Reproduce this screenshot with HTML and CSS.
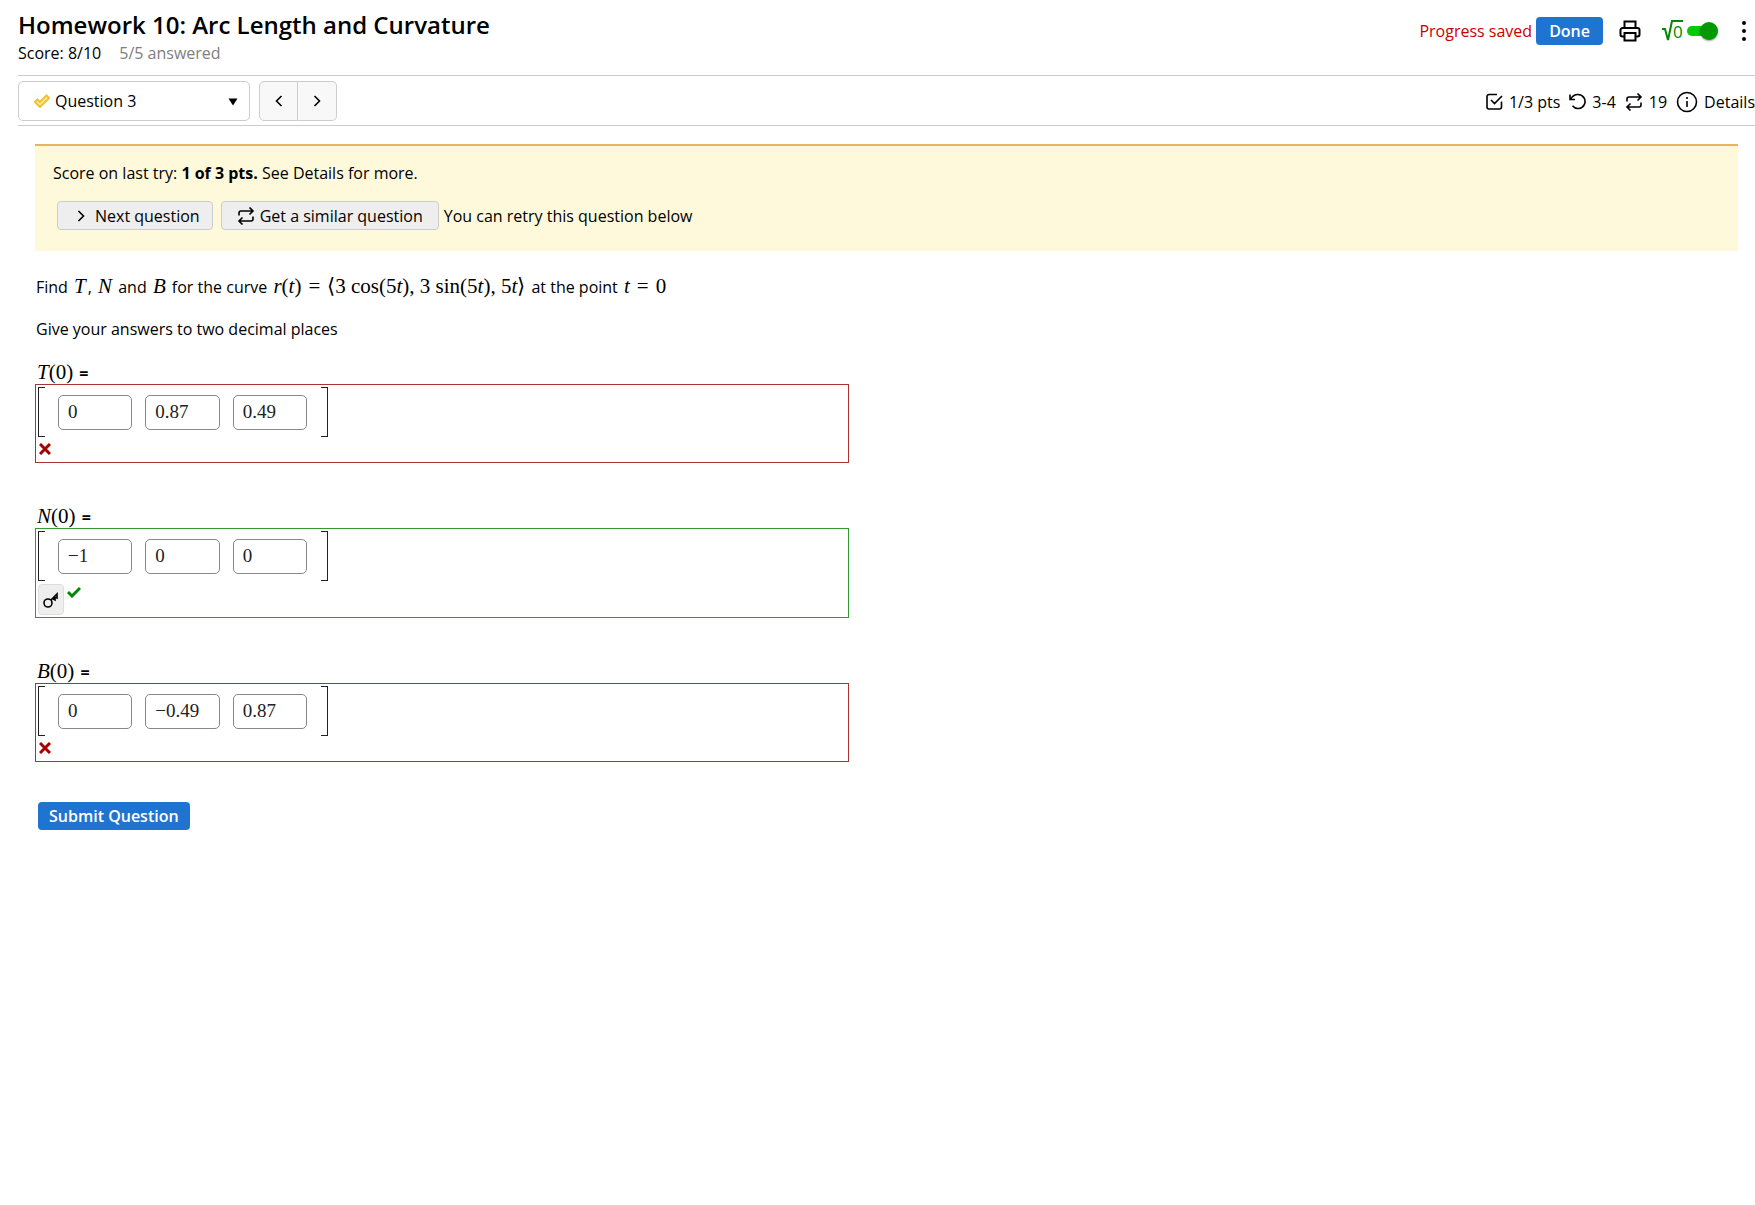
FILE: index.html
```html
<!DOCTYPE html>
<html lang="en">
<head>
<meta charset="utf-8">
<meta name="viewport" content="width=device-width, initial-scale=1">
<title>Homework 10: Arc Length and Curvature</title>
<link rel="stylesheet" href="styles.css">
</head>
<body>
<svg class="defs" aria-hidden="true">
  <symbol id="swap" viewBox="0 0 18 18">
    <path d="M12.500 0.500l3.500 3.500L12.500 7.500M2 8.500V6a2 2 0 0 1 2-2h12M5.500 17.500L2 14l3.500-3.500M16 9.500V12a2 2 0 0 1-2 2H2"/>
  </symbol>
  <symbol id="cross" viewBox="0 0 12 12">
    <path d="M1 1l10 10M11 1l-10 10"/>
  </symbol>
</svg>

<header class="header">
  <div class="heading">
    <h1 class="title">Homework 10: Arc Length and Curvature</h1>
    <p class="progress"><span>Score: 8/10</span><span class="answered">5/5 answered</span></p>
  </div>
  <div class="tools">
    <span class="saved">Progress saved</span>
    <button class="primary done" type="button">Done</button>
    <button class="icon-button print" type="button" aria-label="Print">
      <svg class="icon bold" width="22" height="22" viewBox="0 0 22 22"><path d="M5.500 8V1.500h11V8M5 16.500H3.500a2 2 0 0 1-2-2V10a2 2 0 0 1 2-2h15a2 2 0 0 1 2 2v4.500a2 2 0 0 1-2 2H17M5.500 13h11v7.500h-11z"/></svg>
    </button>
    <label class="math-switch">
      <svg width="24" height="30" viewBox="0 0 24 30" role="img" aria-label="Math entry"><path class="radical" d="M1 13h3l3 11L11 5h11"/><text class="radicand" x="12" y="22">0</text></svg>
      <input class="switch" type="checkbox" checked>
    </label>
    <button class="icon-button more" type="button" aria-label="More">
      <svg width="6" height="22" viewBox="0 0 6 22"><circle cx="3" cy="3" r="2"/><circle cx="3" cy="11" r="2"/><circle cx="3" cy="19" r="2"/></svg>
    </button>
  </div>
</header>

<nav class="bar" aria-label="Questions">
  <div class="picker">
    <select class="picker-select" aria-label="Question"><option>Question 3</option></select>
    <svg class="picker-check" width="16" height="14" viewBox="0 0 16 14"><path d="M1 8l2.500-2.500L6 8l6.500-6.500L15 4l-9 9z"/></svg>
    <svg class="picker-caret" width="10" height="8" viewBox="0 0 10 8"><path d="M0.500 0.500h9L5 7.500z"/></svg>
  </div>
  <div class="pager">
    <button class="pager-button" type="button" aria-label="Previous question"><svg class="icon" width="8" height="12" viewBox="0 0 8 12"><path d="M6.500 1l-5 5 5 5"/></svg></button>
    <button class="pager-button" type="button" aria-label="Next question"><svg class="icon" width="8" height="12" viewBox="0 0 8 12"><path d="M1.500 1l5 5-5 5"/></svg></button>
  </div>
  <div class="facts">
    <svg class="icon" width="17" height="17" viewBox="0 0 17 17"><path d="M11 1.500H3a2 2 0 0 0-2 2V14a2 2 0 0 0 2 2h10.500a2 2 0 0 0 2-2V8.500M5 7l3.500 3.500L16 3"/></svg>
    <span class="fact">1/3 pts</span>
    <svg class="icon" width="17" height="17" viewBox="0 0 17 17"><path d="M1 1.500v5h5M1.500 6.500C3 3.500 5.500 1.500 9 1.500a7 7 0 1 1-5.500 11.300"/></svg>
    <span class="fact">3-4</span>
    <svg class="icon" width="18" height="18"><use href="#swap"/></svg>
    <span class="fact">19</span>
    <button class="details" type="button">
      <svg class="icon" width="22" height="22" viewBox="0 0 22 22"><circle cx="11" cy="11" r="9.500"/><path d="M11 10v6M11 6v2"/></svg>
      Details
    </button>
  </div>
</nav>

<main class="content">
  <section class="notice">
    <p class="notice-text">Score on last try: <b>1 of 3 pts.</b> See Details for more.</p>
    <div class="notice-actions">
      <button class="secondary next" type="button"><svg class="icon" width="8" height="12" viewBox="0 0 8 12"><path d="M1.500 1l5 5-5 5"/></svg>Next question</button>
      <button class="secondary similar" type="button"><svg class="icon" width="18" height="18"><use href="#swap"/></svg>Get a similar question</button>
      <span>You can retry this question below</span>
    </div>
  </section>

  <form class="question">
    <p class="prompt">Find <span class="math"><i>T</i></span>, <span class="math"><i>N</i></span> and <span class="math"><i>B</i></span> for the curve <span class="math"><i>r</i>(<i>t</i>)<span class="relation">=</span>⟨3 cos(5<i>t</i>), 3 sin(5<i>t</i>), 5<i>t</i>⟩</span> at the point <span class="math"><i>t</i><span class="relation">=</span>0</span></p>
    <p class="prompt">Give your answers to two decimal places</p>

    <fieldset class="part">
      <legend class="part-label"><span class="math"><i>T</i>(0)</span> <b>=</b></legend>
      <div class="answer wrong">
        <div class="matrix">
          <input class="cell" type="text" value="0" aria-label="T first component">
          <input class="cell" type="text" value="0.87" aria-label="T second component">
          <input class="cell" type="text" value="0.49" aria-label="T third component">
        </div>
        <div class="marks"><svg class="cross" width="12" height="12" role="img" aria-label="Incorrect"><use href="#cross"/></svg></div>
      </div>
    </fieldset>

    <fieldset class="part">
      <legend class="part-label"><span class="math"><i>N</i>(0)</span> <b>=</b></legend>
      <div class="answer right">
        <div class="matrix">
          <input class="cell" type="text" value="−1" aria-label="N first component">
          <input class="cell" type="text" value="0" aria-label="N second component">
          <input class="cell" type="text" value="0" aria-label="N third component">
        </div>
        <div class="marks">
          <button class="key" type="button" aria-label="Show answer"><svg class="icon" width="16" height="16" viewBox="0 0 16 16"><circle cx="5" cy="11" r="4"/><path d="M8 8l6-6v4l-2-1v3l-2-1"/></svg></button>
          <svg class="tick" width="14" height="12" viewBox="0 0 14 12" role="img" aria-label="Correct"><path d="M1 6l4 4L13 2"/></svg>
        </div>
      </div>
    </fieldset>

    <fieldset class="part">
      <legend class="part-label"><span class="math"><i>B</i>(0)</span> <b>=</b></legend>
      <div class="answer wrong">
        <div class="matrix">
          <input class="cell" type="text" value="0" aria-label="B first component">
          <input class="cell" type="text" value="−0.49" aria-label="B second component">
          <input class="cell" type="text" value="0.87" aria-label="B third component">
        </div>
        <div class="marks"><svg class="cross" width="12" height="12" role="img" aria-label="Incorrect"><use href="#cross"/></svg></div>
      </div>
    </fieldset>

    <button class="primary submit" type="button">Submit Question</button>
  </form>
</main>
</body>
</html>
```
FILE: styles.css
```css
* { box-sizing: border-box; }

body {
  margin: 0;
  background: #fff;
  color: #000;
  font: 16px/20px "Trebuchet MS", "Open Sans", sans-serif;
}

h1, p, fieldset { margin: 0; }

button, select, input { font: inherit; color: inherit; }

button { cursor: pointer; white-space: nowrap; }

.defs { position: absolute; width: 0; height: 0; }

svg { flex: none; }

.icon {
  fill: none;
  stroke: currentColor;
  stroke-width: 1.6;
}

.bold { stroke-width: 2; }

.header {
  display: flex;
  justify-content: space-between;
  margin-left: 18px;
  padding: 8px 8px 11px 0;
  border-bottom: 1px solid #ccc;
}

.title { font-size: 24px; line-height: 34px; font-weight: 600; }

.progress { display: flex; gap: 18px; line-height: 22px; }

.answered { color: #808080; }

.tools { display: flex; align-items: center; height: 46px; }

.saved { color: #c00; }

.primary {
  height: 28px;
  padding: 0 13px;
  border: 0;
  border-radius: 4px;
  background: #1f74d1;
  color: #fff;
  font-weight: 600;
}

.done { margin-left: 4px; }

.icon-button { display: flex; padding: 0; border: 0; background: none; }

.print { margin-left: 16px; }

.math-switch { display: flex; align-items: center; gap: 2px; margin-left: 20px; }

.radical { fill: none; stroke: #080; stroke-width: 2; }

.radicand { fill: #080; font-size: 17px; }

.switch {
  appearance: none;
  position: relative;
  width: 32px;
  height: 18px;
  margin: 0;
}

.switch::before {
  content: "";
  position: absolute;
  inset: 4px 8px 4px 0;
  border-radius: 5px;
  background: #0c0;
}

.switch::after {
  content: "";
  position: absolute;
  top: 0;
  right: 1px;
  width: 18px;
  height: 18px;
  border-radius: 50%;
  background: #090;
  box-shadow: 0 1px 2px #0006;
}

.more { margin-left: 22px; }

.bar {
  display: flex;
  align-items: center;
  margin-left: 18px;
  padding: 5px 0 4px;
  border-bottom: 1px solid #ccc;
}

.picker { position: relative; width: 232px; }

.picker-select {
  display: block;
  appearance: none;
  width: 100%;
  height: 40px;
  padding: 0 36px;
  border: 1px solid #ccc;
  border-radius: 5px;
  background: #fff;
}

.picker-check { position: absolute; left: 16px; top: 13px; fill: #fff0b0; stroke: #f0c030; stroke-width: 2; }

.picker-caret { position: absolute; right: 12px; top: 17px; pointer-events: none; }

.pager { display: flex; margin-left: 9px; }

.pager-button {
  display: grid;
  place-items: center;
  width: 39px;
  height: 40px;
  padding: 0;
  border: 1px solid #ccc;
  background: #f8f8f8;
}

.pager-button:first-child { border-radius: 5px 0 0 5px; }

.pager-button:last-child { border-left: 0; border-radius: 0 5px 5px 0; }

.facts { display: flex; align-items: center; margin-left: auto; padding-top: 1px; }

.fact { margin: 0 9px 0 6px; }

.details { display: flex; align-items: center; gap: 6px; padding: 0; border: 0; background: none; }

.content { padding: 18px 17px 24px 35px; }

.notice {
  padding: 17px 18px 18px;
  border-top: 2px solid #e9b45c;
  background: #fff9db;
}

.notice-actions { display: flex; align-items: center; padding: 18px 4px 3px; }

.secondary {
  display: flex;
  align-items: center;
  height: 29px;
  padding: 0 15px;
  border: 1px solid #ccc;
  border-radius: 4px;
  background: #eee;
}

.next { gap: 10px; padding: 0 12px 0 19px; }

.similar { gap: 5px; margin: 0 5px 0 8px; }

.question { padding-top: 25px; }

.prompt { margin-bottom: 22px; padding-left: 1px; line-height: 20px; }

.math { margin: 0 2px; font-family: "Liberation Serif", serif; font-size: 21px; line-height: 20px; }

.relation { margin: 0 7px; }

.part { width: 47.8%; min-width: 320px; margin-bottom: 42px; padding: 0; border: 0; }

.part:last-of-type { margin-bottom: 40px; }

.part-label { padding: 1px 0 0; line-height: 22px; }

.answer { padding: 2px; border: 1px solid; }

.wrong { border-color: #a33; }

.right { border-color: #393; }

.matrix {
  position: relative;
  display: flex;
  gap: 13px;
  width: 290px;
  height: 50px;
  padding: 8px 21px 7px 20px;
}

.matrix::before, .matrix::after {
  content: "";
  position: absolute;
  top: 0;
  bottom: 0;
  width: 6px;
  border: 1px solid #222;
}

.matrix::before { left: 0; border-right: 0; }

.matrix::after { right: 0; border-left: 0; }

.cell {
  flex: 1;
  min-width: 0;
  padding: 0 9px 1px;
  border: 1px solid #888;
  border-radius: 5px;
  color: #222;
  font: 19px/20px "Liberation Serif", serif;
}

.marks { display: flex; gap: 3px; padding-top: 3px; }

.cross { margin: 3px 1px 5px; stroke: #a00; stroke-width: 3; }

.key {
  display: grid;
  place-items: center;
  width: 26px;
  height: 31px;
  padding: 0;
  border: 1px solid #ddd;
  border-radius: 4px;
  background: #eee;
}

.tick { margin-top: 2px; fill: none; stroke: #080; stroke-width: 3; }

.submit { margin-left: 3px; padding: 0 11px; }
```
